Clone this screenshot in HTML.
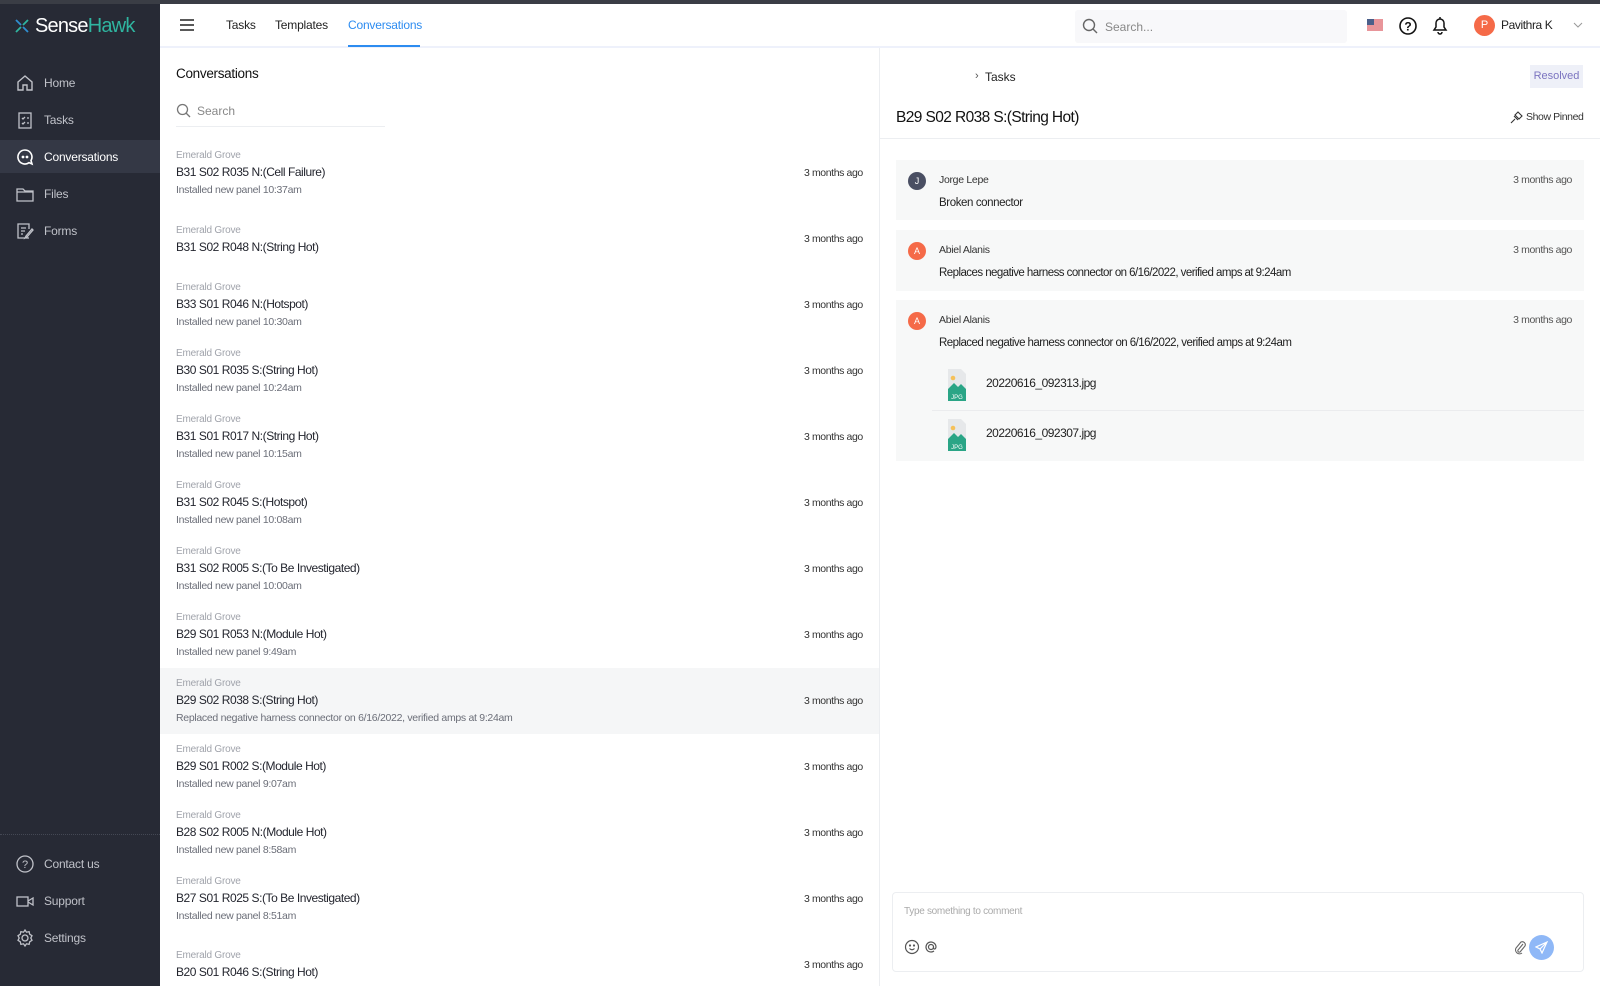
<!DOCTYPE html>
<html><head><meta charset="utf-8"><style>
*{box-sizing:border-box;margin:0;padding:0}
body{width:1600px;height:986px;overflow:hidden;font-family:"Liberation Sans",sans-serif;background:#fff;position:relative;color:#222}
.a{position:absolute;white-space:nowrap}
#top{position:absolute;left:0;top:0;width:1600px;height:4px;background:#3a3d45}
#side{position:absolute;left:0;top:4px;width:160px;height:982px;background:#272a35}
.nav{position:absolute;left:0;width:160px;height:33px;color:#c0c2c9;font-size:12px;letter-spacing:-.2px}
.nav span{position:absolute;left:44px;top:10px}
.nav svg{position:absolute;left:15px;top:7px}
.li .g{font-size:10px;color:#a0a3ab;letter-spacing:-.2px}
.li .t{font-size:12px;color:#23252e;letter-spacing:-.45px;margin-top:4px}
.li .s{font-size:10.5px;color:#6b6e78;letter-spacing:-.3px;margin-top:5px}
.tm{font-size:10.5px;color:#333;letter-spacing:-.4px}
.card{position:absolute;left:896px;width:688px;background:#f7f8f8}
.av{position:absolute;left:12px;top:12px;width:18px;height:18px;border-radius:50%;color:#fff;font-size:9px;text-align:center;line-height:18px}
</style></head><body>
<div id="top"></div>
<div id="side">
 <svg class="a" style="left:15px;top:15px" width="14" height="14" fill="none" stroke-width="1.8"><path d="M1 1l5 5M13 13L8 8" stroke="#2f8fd0"/><path d="M13 1L8 6M1 13l5-5" stroke="#2fb5a0"/></svg>
 <div class="a" style="left:35px;top:11px;font-size:20px;color:#fff;letter-spacing:-.8px">Sense<span style="color:#2fb5a0">Hawk</span></div>
 <div class="nav" style="top:62px"><svg width="20" height="20" viewBox="0 0 20 20" fill="none" stroke="#c0c2c9" stroke-width="1.4"><path d="M3 9L10 3l7 6v8h-5v-5H8v5H3z"/></svg><span>Home</span></div>
 <div class="nav" style="top:99px"><svg width="20" height="20" viewBox="0 0 20 20" fill="none" stroke="#c0c2c9" stroke-width="1.3"><rect x="4" y="3" width="12" height="15"/><path d="M7 8l1 1 2-2M7 13l1 1 2-2M12 8h2M12 13h2"/></svg><span>Tasks</span></div>
 <div class="nav" style="top:136px;background:#343845;color:#fff"><svg width="20" height="20" viewBox="0 0 20 20" fill="none" stroke="#fff" stroke-width="1.6"><path d="M10 3a7 7 0 1 0 4 12.7L17 17l-1-3.5A7 7 0 0 0 10 3z"/><circle cx="8" cy="10" r=".6" fill="#fff"/><circle cx="12" cy="10" r=".6" fill="#fff"/></svg><span>Conversations</span></div>
 <div class="nav" style="top:173px"><svg width="20" height="20" viewBox="0 0 20 20" fill="none" stroke="#c0c2c9" stroke-width="1.3"><path d="M2 5h6l2 2h8v10H2z M2 8h16"/></svg><span>Files</span></div>
 <div class="nav" style="top:210px"><svg width="20" height="20" viewBox="0 0 20 20" fill="none" stroke="#c0c2c9" stroke-width="1.3"><path d="M14 17H3V3h11v5M6 7h5M6 10h4M6 13h2M11 15l6-7 1 1-6 7-2 1z"/></svg><span>Forms</span></div>
 <div class="a" style="left:0;top:830px;width:160px;border-top:1px dotted #444854"></div>
 <div class="nav" style="top:843px"><svg width="20" height="20" viewBox="0 0 20 20" fill="none" stroke="#c0c2c9" stroke-width="1.3"><circle cx="10" cy="10" r="8"/><text x="10" y="14" font-size="11" text-anchor="middle" fill="#c0c2c9" stroke="none" font-family="Liberation Sans">?</text></svg><span>Contact us</span></div>
 <div class="nav" style="top:880px"><svg width="20" height="20" viewBox="0 0 20 20" fill="none" stroke="#c0c2c9" stroke-width="1.3"><rect x="2" y="6" width="11" height="9"/><path d="M13 10l5-3v7l-5-3"/></svg><span>Support</span></div>
 <div class="nav" style="top:917px"><svg width="20" height="20" viewBox="0 0 20 20" fill="none" stroke="#c0c2c9" stroke-width="1.3"><circle cx="10" cy="10" r="3"/><path d="M10 2l1.5 2.2 2.6-.6.6 2.6L17 7.7 15.8 10 17 12.3l-2.3 1.5-.6 2.6-2.6-.6L10 18l-1.5-2.2-2.6.6-.6-2.6L3 12.3 4.2 10 3 7.7l2.3-1.5.6-2.6 2.6.6z"/></svg><span>Settings</span></div>
</div>
<div class="a" style="left:160px;top:4px;width:1440px;height:44px;border-bottom:2px solid #eef1fb;background:#fff"></div>
<svg class="a" style="left:179px;top:18px" width="16" height="14"><path d="M1 2h14M1 7h14M1 12h14" stroke="#222" stroke-width="1.6"/></svg>
<div class="a" style="left:226px;top:18px;font-size:12px;letter-spacing:-.2px">Tasks</div>
<div class="a" style="left:275px;top:18px;font-size:12px;letter-spacing:-.2px">Templates</div>
<div class="a" style="left:348px;top:18px;font-size:12px;color:#2d8cf0;letter-spacing:-.2px">Conversations</div>
<div class="a" style="left:348px;top:45px;width:72px;height:2px;background:#2d8cf0"></div>
<div class="a" style="left:1075px;top:10px;width:272px;height:33px;background:#f8f8fa;border-radius:3px"></div>
<svg class="a" style="left:1082px;top:18px" width="16" height="16" fill="none" stroke="#666" stroke-width="1.4"><circle cx="7" cy="7" r="5.5"/><path d="M11 11l4 4"/></svg>
<div class="a" style="left:1105px;top:20px;font-size:12px;color:#888">Search...</div>
<div class="a" style="left:1367px;top:19px;width:16px;height:12px;background:#e8959a"><div style="width:7px;height:6px;background:#4b5f8a"></div></div>
<svg class="a" style="left:1398px;top:16px" width="20" height="20" fill="none" stroke="#111" stroke-width="1.6"><circle cx="10" cy="10" r="8"/><text x="10" y="14.5" font-size="12" font-weight="bold" text-anchor="middle" fill="#111" stroke="none" font-family="Liberation Sans">?</text></svg>
<svg class="a" style="left:1431px;top:15px" width="18" height="20" fill="none" stroke="#111" stroke-width="1.5"><path d="M3 15h12l-2-3V8a4 4 0 0 0-8 0v4zM7 17a2 2 0 0 0 4 0M9 2v2"/></svg>
<div class="a" style="left:1474px;top:15px;width:21px;height:21px;border-radius:50%;background:#f56a48;color:#fff;font-size:11px;text-align:center;line-height:21px">P</div>
<div class="a" style="left:1501px;top:18px;font-size:12px;letter-spacing:-.4px">Pavithra K</div>
<svg class="a" style="left:1573px;top:21px" width="10" height="8"><path d="M1 2l4 4 4-4" stroke="#999" fill="none"/></svg>
<div class="a" style="left:879px;top:48px;width:1px;height:938px;background:#eceef1"></div>
<div class="a" style="left:176px;top:66px;font-size:13.5px;color:#111;letter-spacing:-.3px">Conversations</div>
<svg class="a" style="left:176px;top:103px" width="15" height="15" fill="none" stroke="#777" stroke-width="1.3"><circle cx="6.5" cy="6.5" r="5"/><path d="M10 10l4 4"/></svg>
<div class="a" style="left:197px;top:104px;font-size:12px;color:#888">Search</div>
<div class="a" style="left:176px;top:126px;width:209px;height:1px;background:#eceef1"></div>
<div class="a" style="left:160px;top:668px;width:719px;height:66px;background:#f5f6f7"></div>

<div class="a li" style="left:176px;top:150px"><div class="g">Emerald Grove</div><div class="t">B31 S02 R035 N:(Cell Failure)</div><div class="s">Installed new panel 10:37am</div></div><div class="a tm" style="left:804px;top:167px">3 months ago</div>
<div class="a li" style="left:176px;top:225px"><div class="g">Emerald Grove</div><div class="t">B31 S02 R048 N:(String Hot)</div></div><div class="a tm" style="left:804px;top:233px">3 months ago</div>
<div class="a li" style="left:176px;top:282px"><div class="g">Emerald Grove</div><div class="t">B33 S01 R046 N:(Hotspot)</div><div class="s">Installed new panel 10:30am</div></div><div class="a tm" style="left:804px;top:299px">3 months ago</div>
<div class="a li" style="left:176px;top:348px"><div class="g">Emerald Grove</div><div class="t">B30 S01 R035 S:(String Hot)</div><div class="s">Installed new panel 10:24am</div></div><div class="a tm" style="left:804px;top:365px">3 months ago</div>
<div class="a li" style="left:176px;top:414px"><div class="g">Emerald Grove</div><div class="t">B31 S01 R017 N:(String Hot)</div><div class="s">Installed new panel 10:15am</div></div><div class="a tm" style="left:804px;top:431px">3 months ago</div>
<div class="a li" style="left:176px;top:480px"><div class="g">Emerald Grove</div><div class="t">B31 S02 R045 S:(Hotspot)</div><div class="s">Installed new panel 10:08am</div></div><div class="a tm" style="left:804px;top:497px">3 months ago</div>
<div class="a li" style="left:176px;top:546px"><div class="g">Emerald Grove</div><div class="t">B31 S02 R005 S:(To Be Investigated)</div><div class="s">Installed new panel 10:00am</div></div><div class="a tm" style="left:804px;top:563px">3 months ago</div>
<div class="a li" style="left:176px;top:612px"><div class="g">Emerald Grove</div><div class="t">B29 S01 R053 N:(Module Hot)</div><div class="s">Installed new panel 9:49am</div></div><div class="a tm" style="left:804px;top:629px">3 months ago</div>
<div class="a li" style="left:176px;top:678px"><div class="g">Emerald Grove</div><div class="t">B29 S02 R038 S:(String Hot)</div><div class="s">Replaced negative harness connector on 6/16/2022, verified amps at 9:24am</div></div><div class="a tm" style="left:804px;top:695px">3 months ago</div>
<div class="a li" style="left:176px;top:744px"><div class="g">Emerald Grove</div><div class="t">B29 S01 R002 S:(Module Hot)</div><div class="s">Installed new panel 9:07am</div></div><div class="a tm" style="left:804px;top:761px">3 months ago</div>
<div class="a li" style="left:176px;top:810px"><div class="g">Emerald Grove</div><div class="t">B28 S02 R005 N:(Module Hot)</div><div class="s">Installed new panel 8:58am</div></div><div class="a tm" style="left:804px;top:827px">3 months ago</div>
<div class="a li" style="left:176px;top:876px"><div class="g">Emerald Grove</div><div class="t">B27 S01 R025 S:(To Be Investigated)</div><div class="s">Installed new panel 8:51am</div></div><div class="a tm" style="left:804px;top:893px">3 months ago</div>
<div class="a li" style="left:176px;top:950px"><div class="g">Emerald Grove</div><div class="t">B20 S01 R046 S:(String Hot)</div></div><div class="a tm" style="left:804px;top:959px">3 months ago</div>

<div class="a" style="left:975px;top:70px;font-size:11px;color:#555">›</div>
<div class="a" style="left:985px;top:70px;font-size:12px;color:#222">Tasks</div>
<div class="a" style="left:1530px;top:65px;width:53px;height:23px;background:#eef0f8;color:#7b74c0;font-size:11px;text-align:center;line-height:23px">Resolved</div>
<div class="a" style="left:896px;top:109px;font-size:15.5px;color:#111;letter-spacing:-.6px">B29 S02 R038 S:(String Hot)</div>
<svg class="a" style="left:1510px;top:111px" width="13" height="13" fill="none" stroke="#333" stroke-width="1.1"><path d="M1 12l4-4M4 5l4 4M5 4l3-3 4 4-3 3z"/></svg>
<div class="a" style="left:1526px;top:111px;font-size:10.5px;color:#333;letter-spacing:-.4px">Show Pinned</div>
<div class="a" style="left:880px;top:138px;width:720px;height:1px;background:#eceef1"></div>

<div class="card" style="top:160px;height:60px"><div class="av" style="background:#4a4f63">J</div>
<div class="a" style="left:43px;top:14px;font-size:10.5px;color:#333;letter-spacing:-.3px">Jorge Lepe</div>
<div class="a" style="right:12px;top:14px;font-size:10.5px;color:#555;letter-spacing:-.4px">3 months ago</div>
<div class="a" style="left:43px;top:37px;font-size:11.5px;color:#222;letter-spacing:-.4px">Broken connector</div></div>
<div class="card" style="top:230px;height:61px"><div class="av" style="background:#f56a48">A</div>
<div class="a" style="left:43px;top:14px;font-size:10.5px;color:#333;letter-spacing:-.3px">Abiel Alanis</div>
<div class="a" style="right:12px;top:14px;font-size:10.5px;color:#555;letter-spacing:-.4px">3 months ago</div>
<div class="a" style="left:43px;top:37px;font-size:11.5px;color:#222;letter-spacing:-.55px">Replaces negative harness connector on 6/16/2022, verified amps at 9:24am</div></div>
<div class="card" style="top:300px;height:161px"><div class="av" style="background:#f56a48">A</div>
<div class="a" style="left:43px;top:14px;font-size:10.5px;color:#333;letter-spacing:-.3px">Abiel Alanis</div>
<div class="a" style="right:12px;top:14px;font-size:10.5px;color:#555;letter-spacing:-.4px">3 months ago</div>
<div class="a" style="left:43px;top:37px;font-size:11.5px;color:#222;letter-spacing:-.55px">Replaced negative harness connector on 6/16/2022, verified amps at 9:24am</div>
<div class="a" style="left:36px;top:110px;width:652px;height:1px;background:#ebecee"></div>
<svg class="a" style="left:52px;top:69px" width="18" height="32"><path d="M0 0h13l5 5v27H0z" fill="#e6e8ea"/><circle cx="5" cy="9" r="2.3" fill="#f5c15a"/><path d="M0 20l6-6 4 4 3-3 5 5v12H0z" fill="#2aa586"/><text x="9" y="30" font-size="6" fill="#fff" text-anchor="middle" font-family="Liberation Sans">JPG</text></svg>
<div class="a" style="left:90px;top:76px;font-size:12px;letter-spacing:-.5px;color:#222">20220616_092313.jpg</div>
<svg class="a" style="left:52px;top:119px" width="18" height="32"><path d="M0 0h13l5 5v27H0z" fill="#e6e8ea"/><circle cx="5" cy="9" r="2.3" fill="#f5c15a"/><path d="M0 20l6-6 4 4 3-3 5 5v12H0z" fill="#2aa586"/><text x="9" y="30" font-size="6" fill="#fff" text-anchor="middle" font-family="Liberation Sans">JPG</text></svg>
<div class="a" style="left:90px;top:126px;font-size:12px;letter-spacing:-.5px;color:#222">20220616_092307.jpg</div></div>

<div class="a" style="left:892px;top:892px;width:692px;height:80px;border:1px solid #eceef1;border-radius:4px"></div>
<div class="a" style="left:904px;top:906px;font-size:10px;color:#aaa;letter-spacing:-.3px">Type something to comment</div>
<svg class="a" style="left:904px;top:939px" width="36" height="16" fill="none" stroke="#555" stroke-width="1.2"><circle cx="8" cy="8" r="6.5"/><circle cx="6" cy="6.5" r=".5"/><circle cx="10" cy="6.5" r=".5"/><path d="M5.5 9.5q2.5 2.5 5 0"/><circle cx="27" cy="8" r="2.5"/><path d="M29.5 8v1.5q2 1.5 2.5-1.5a5 5 0 1 0-2 4"/></svg>
<svg class="a" style="left:1514px;top:940px" width="12" height="15" fill="none" stroke="#666" stroke-width="1.1"><path d="M9 4l-5 6a1.5 1.5 0 0 0 2 2l5-6a3 3 0 0 0-4-4L2 8a4 4 0 0 0 6 5"/></svg>
<div class="a" style="left:1529px;top:935px;width:25px;height:25px;border-radius:50%;background:#8fb8f7"></div>
<svg class="a" style="left:1535px;top:941px" width="13" height="13" fill="none" stroke="#fff" stroke-width="1.2"><path d="M12 1L1 6l4 2 2 4zM12 1L5 8"/></svg>
</body></html>
